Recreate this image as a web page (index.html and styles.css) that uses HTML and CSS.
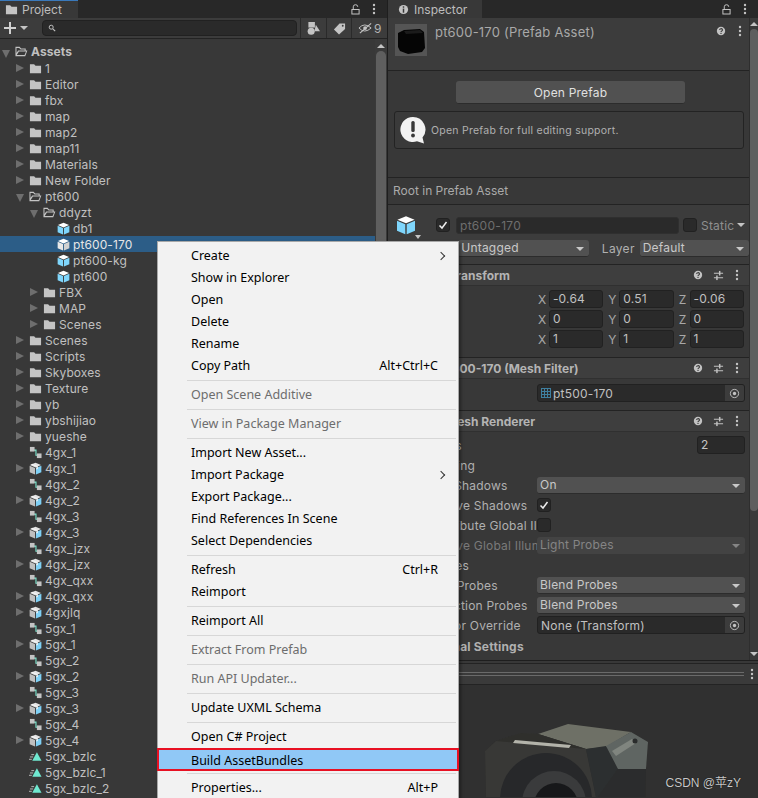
FILE: index.html
```html
<!DOCTYPE html>
<html lang="en">
<head>
    <meta charset="UTF-8">
    <title>Unity Project and Inspector</title>
    <link rel="stylesheet" href="styles.css">
</head>
<body>
    <svg class="defs" width="0" height="0">
        <symbol id="folder" viewBox="0 0 14 14"><path d="M1 2.5h4.5L7 4h6v8H1z" fill="#c4c4c4"/></symbol>
        <symbol id="folder-open" viewBox="0 0 14 14"><path d="M.5 2h4.5l1.5 1.7h5v2.2h1.8L11 12H.5zM1.6 3.2v5.4L3.4 5.900h7V4.900H6L4.500 3.200zM1.900 10.900h8.400l1.600-3.900H4.200z" fill="#c4c4c4" fill-rule="evenodd"/></symbol>
        <symbol id="cube" viewBox="0 0 14 14"><path d="M7 .8l6 2.500L7 5.800 1 3.300z" fill="#fff"/><path d="M.7 4l5.800 2.400v7L.7 11z" fill="#7fd6fc"/><path d="M13.300 4L7.500 6.400v7l5.800-2.400z" fill="#7fd6fc"/></symbol>
        <symbol id="cube-sel" viewBox="0 0 14 14"><path d="M7 .8l6 2.500L7 5.800 1 3.300z" fill="#fff"/><path d="M.7 4l5.800 2.400v7L.7 11z" fill="#e8e8e8"/><path d="M13.300 4L7.500 6.400v7l5.800-2.400z" fill="#d2d2d2"/></symbol>
        <symbol id="model" viewBox="0 0 14 14"><path d="M7 .8l6 2.500L7 5.800 1 3.300z" fill="#e4e4e4"/><path d="M.7 4l5.800 2.400v7L.7 11z" fill="#c0c0c0"/><path d="M13.300 4L7.500 6.400v7l5.800-2.400z" fill="#7fd0f5"/><path d="M3.500 2l6 2.500v3l-1.500.6V5.200L2 2.700z" fill="#f4f4f4"/></symbol>
        <symbol id="ctrl" viewBox="0 0 14 14"><path d="M4 4.500h3.500v5.500H10" fill="none" stroke="#7de8d0" stroke-width="1.200"/><rect x="1" y="1" width="5" height="5" fill="#c4c4c4"/><rect x="8.500" y="8" width="5" height="5" fill="#c4c4c4"/></symbol>
        <symbol id="clip" viewBox="0 0 14 14"><path d="M8.500 2.500l5 9h-10z" fill="#70e8d0"/><path d="M2.500 5h3M1 7.500h3.500M0 10h3" stroke="#c4c4c4" stroke-width="1"/></symbol>
        <symbol id="help" viewBox="0 0 12 12"><circle cx="6" cy="6" r="5" fill="#c2c2c2"/><path d="M4.400 4.700a1.700 1.500 0 1 1 2.500 1.300c-.6.400-.9.600-.9 1.300" fill="none" stroke="#3c3c3c" stroke-width="1.300"/><rect x="5.300" y="8.200" width="1.400" height="1.400" fill="#3c3c3c"/></symbol>
        <symbol id="sliders" viewBox="0 0 12 12"><path d="M1 3.500h10M1 8.500h10" stroke="#c2c2c2" stroke-width="1.200"/><rect x="6.500" y="1" width="1.600" height="5" fill="#c2c2c2"/><rect x="3.500" y="6" width="1.600" height="5" fill="#c2c2c2"/></symbol>
        <symbol id="dots" viewBox="0 0 4 12"><circle cx="2" cy="2" r="1.200" fill="#c4c4c4"/><circle cx="2" cy="6" r="1.200" fill="#c4c4c4"/><circle cx="2" cy="10" r="1.200" fill="#c4c4c4"/></symbol>
        <symbol id="lock" viewBox="0 0 10 12"><path d="M2.500 5.500V3a2.500 2.300 0 0 1 5 0" fill="none" stroke="#c4c4c4" stroke-width="1.100"/><rect x="1" y="6" width="8" height="5" fill="none" stroke="#c4c4c4" stroke-width="1.100"/></symbol>
        <symbol id="target" viewBox="0 0 12 12"><circle cx="6" cy="6" r="4.500" fill="none" stroke="#c4c4c4" stroke-width="1"/><circle cx="6" cy="6" r="1.800" fill="#c4c4c4"/></symbol>
    </svg>

    <div class="editor">
        <section class="panel project">
            <div class="tabbar">
                <div class="tab tab-project">
                    <svg class="tab-icon"><use href="#folder"/></svg>
                    <span>Project</span>
                </div>
                <div class="tab-tools">
                    <svg class="lock"><use href="#lock"/></svg>
                    <svg class="dots"><use href="#dots"/></svg>
                </div>
            </div>
            <div class="toolbar">
                <div class="add"><span class="plus"></span><span class="caret"></span></div>
                <div class="search">
                    <svg viewBox="0 0 10 10" class="search-icon"><circle cx="4" cy="4" r="2.500" fill="none" stroke="#c4c4c4" stroke-width="1.200"/><path d="M6 6l3 3" stroke="#c4c4c4" stroke-width="1.400"/></svg>
                </div>
                <div class="tool tool-type">
                    <svg viewBox="0 0 14 14" class="tool-icon"><rect x="1.500" y="0" width="7" height="6" fill="#c4c4c4"/><circle cx="4.500" cy="10" r="3.800" fill="#c4c4c4"/><path d="M9.500 3l4.500 7H8z" fill="#c4c4c4"/></svg>
                </div>
                <div class="tool tool-label">
                    <svg viewBox="0 0 14 14" class="tool-icon"><path d="M7 1.500h6v6L6.500 13.500 1 8z" fill="#c4c4c4"/><circle cx="10.500" cy="4" r="1" fill="#3c3c3c"/></svg>
                </div>
                <div class="tool tool-hidden">
                    <svg viewBox="0 0 16 12" class="eye"><path d="M1 6q6-6.500 13 0q-7 6.500-13 0z" fill="none" stroke="#c4c4c4" stroke-width="1"/><circle cx="7.500" cy="6" r="2" fill="#c4c4c4"/><path d="M2 11.500L14 1" stroke="#c4c4c4" stroke-width="1.200"/></svg>
                    <span>9</span>
                </div>
            </div>
            <div class="browser">
                <div class="tree">
                    <div class="row root d0"><span class="arrow open"></span><svg class="ic"><use href="#folder-open"/></svg><span>Assets</span></div>
                    <div class="row d1"><span class="arrow"></span><svg class="ic"><use href="#folder"/></svg><span>1</span></div>
                    <div class="row d1"><span class="arrow"></span><svg class="ic"><use href="#folder"/></svg><span>Editor</span></div>
                    <div class="row d1"><span class="arrow"></span><svg class="ic"><use href="#folder"/></svg><span>fbx</span></div>
                    <div class="row d1"><span class="arrow"></span><svg class="ic"><use href="#folder"/></svg><span>map</span></div>
                    <div class="row d1"><span class="arrow"></span><svg class="ic"><use href="#folder"/></svg><span>map2</span></div>
                    <div class="row d1"><span class="arrow"></span><svg class="ic"><use href="#folder"/></svg><span>map11</span></div>
                    <div class="row d1"><span class="arrow"></span><svg class="ic"><use href="#folder"/></svg><span>Materials</span></div>
                    <div class="row d1"><span class="arrow"></span><svg class="ic"><use href="#folder"/></svg><span>New Folder</span></div>
                    <div class="row d1"><span class="arrow open"></span><svg class="ic"><use href="#folder-open"/></svg><span>pt600</span></div>
                    <div class="row d2"><span class="arrow open"></span><svg class="ic"><use href="#folder-open"/></svg><span>ddyzt</span></div>
                    <div class="row d3"><span class="arrow none"></span><svg class="ic"><use href="#cube"/></svg><span>db1</span></div>
                    <div class="row d3 selected"><span class="arrow none"></span><svg class="ic"><use href="#cube-sel"/></svg><span>pt600-170</span></div>
                    <div class="row d3"><span class="arrow none"></span><svg class="ic"><use href="#cube"/></svg><span>pt600-kg</span></div>
                    <div class="row d3"><span class="arrow none"></span><svg class="ic"><use href="#cube"/></svg><span>pt600</span></div>
                    <div class="row d2"><span class="arrow"></span><svg class="ic"><use href="#folder"/></svg><span>FBX</span></div>
                    <div class="row d2"><span class="arrow"></span><svg class="ic"><use href="#folder"/></svg><span>MAP</span></div>
                    <div class="row d2"><span class="arrow"></span><svg class="ic"><use href="#folder"/></svg><span>Scenes</span></div>
                    <div class="row d1"><span class="arrow"></span><svg class="ic"><use href="#folder"/></svg><span>Scenes</span></div>
                    <div class="row d1"><span class="arrow"></span><svg class="ic"><use href="#folder"/></svg><span>Scripts</span></div>
                    <div class="row d1"><span class="arrow"></span><svg class="ic"><use href="#folder"/></svg><span>Skyboxes</span></div>
                    <div class="row d1"><span class="arrow"></span><svg class="ic"><use href="#folder"/></svg><span>Texture</span></div>
                    <div class="row d1"><span class="arrow"></span><svg class="ic"><use href="#folder"/></svg><span>yb</span></div>
                    <div class="row d1"><span class="arrow"></span><svg class="ic"><use href="#folder"/></svg><span>ybshijiao</span></div>
                    <div class="row d1"><span class="arrow"></span><svg class="ic"><use href="#folder"/></svg><span>yueshe</span></div>
                    <div class="row d1"><span class="arrow none"></span><svg class="ic"><use href="#ctrl"/></svg><span>4gx_1</span></div>
                    <div class="row d1"><span class="arrow"></span><svg class="ic"><use href="#model"/></svg><span>4gx_1</span></div>
                    <div class="row d1"><span class="arrow none"></span><svg class="ic"><use href="#ctrl"/></svg><span>4gx_2</span></div>
                    <div class="row d1"><span class="arrow"></span><svg class="ic"><use href="#model"/></svg><span>4gx_2</span></div>
                    <div class="row d1"><span class="arrow none"></span><svg class="ic"><use href="#ctrl"/></svg><span>4gx_3</span></div>
                    <div class="row d1"><span class="arrow"></span><svg class="ic"><use href="#model"/></svg><span>4gx_3</span></div>
                    <div class="row d1"><span class="arrow none"></span><svg class="ic"><use href="#ctrl"/></svg><span>4gx_jzx</span></div>
                    <div class="row d1"><span class="arrow"></span><svg class="ic"><use href="#model"/></svg><span>4gx_jzx</span></div>
                    <div class="row d1"><span class="arrow none"></span><svg class="ic"><use href="#ctrl"/></svg><span>4gx_qxx</span></div>
                    <div class="row d1"><span class="arrow"></span><svg class="ic"><use href="#model"/></svg><span>4gx_qxx</span></div>
                    <div class="row d1"><span class="arrow"></span><svg class="ic"><use href="#model"/></svg><span>4gxjlq</span></div>
                    <div class="row d1"><span class="arrow none"></span><svg class="ic"><use href="#ctrl"/></svg><span>5gx_1</span></div>
                    <div class="row d1"><span class="arrow"></span><svg class="ic"><use href="#model"/></svg><span>5gx_1</span></div>
                    <div class="row d1"><span class="arrow none"></span><svg class="ic"><use href="#ctrl"/></svg><span>5gx_2</span></div>
                    <div class="row d1"><span class="arrow"></span><svg class="ic"><use href="#model"/></svg><span>5gx_2</span></div>
                    <div class="row d1"><span class="arrow none"></span><svg class="ic"><use href="#ctrl"/></svg><span>5gx_3</span></div>
                    <div class="row d1"><span class="arrow"></span><svg class="ic"><use href="#model"/></svg><span>5gx_3</span></div>
                    <div class="row d1"><span class="arrow none"></span><svg class="ic"><use href="#ctrl"/></svg><span>5gx_4</span></div>
                    <div class="row d1"><span class="arrow"></span><svg class="ic"><use href="#model"/></svg><span>5gx_4</span></div>
                    <div class="row d1"><span class="arrow none"></span><svg class="ic"><use href="#clip"/></svg><span>5gx_bzlc</span></div>
                    <div class="row d1"><span class="arrow none"></span><svg class="ic"><use href="#clip"/></svg><span>5gx_bzlc_1</span></div>
                    <div class="row d1"><span class="arrow none"></span><svg class="ic"><use href="#clip"/></svg><span>5gx_bzlc_2</span></div>
                </div>
                <div class="scrollbar">
                    <span class="sb-up"></span>
                    <span class="sb-thumb"></span>
                </div>
            </div>
        </section>

        <section class="panel inspector">
            <div class="tabbar">
                <div class="tab tab-inspector">
                    <svg viewBox="0 0 12 12" class="tab-icon info"><circle cx="6" cy="6" r="5" fill="#c4c4c4"/><rect x="5.200" y="5" width="1.600" height="4.500" fill="#383838"/><rect x="5.200" y="2.500" width="1.600" height="1.600" fill="#383838"/></svg>
                    <span>Inspector</span>
                </div>
                <div class="tab-tools">
                    <svg class="lock"><use href="#lock"/></svg>
                    <svg class="dots"><use href="#dots"/></svg>
                </div>
            </div>
            <div class="insp-body">
                <div class="insp-main">
                    <div class="asset-head">
                        <div class="thumb">
                            <svg viewBox="0 0 32 32"><path d="M3 9l6-3 16-1 4 3 1 16-3 4-14 2-8-3-2-4z" fill="#050505"/><path d="M9 7l16-1 3 3-17 1z" fill="#1b1b1b"/></svg>
                        </div>
                        <div class="asset-title">pt600-170 (Prefab Asset)</div>
                        <svg class="head-help"><use href="#help"/></svg>
                        <svg class="dots"><use href="#dots"/></svg>
                    </div>
                    <div class="prefab-box">
                        <button class="open-btn">Open Prefab</button>
                        <div class="helpbox">
                            <svg viewBox="0 0 26 28" class="help-bubble"><path d="M13 1a12.500 12.500 0 1 0 4 24.300L24 27.500l-1.500-6A12.500 12.500 0 0 0 13 1z" fill="#f2f2f2"/><rect x="11.300" y="5" width="3.400" height="11" rx="1.500" fill="#383838"/><circle cx="13" cy="19.500" r="1.900" fill="#383838"/></svg>
                            <span>Open Prefab for full editing support.</span>
                        </div>
                    </div>
                    <div class="root-label">Root in Prefab Asset</div>
                    <div class="go-head">
                        <div class="go-row1">
                            <span class="go-icon"><svg viewBox="0 0 14 14"><use href="#cube"/></svg><span class="go-caret"></span></span>
                            <span class="check on"><svg viewBox="0 0 12 12"><path d="M2.500 6.500l2.500 2.500 4.500-6" fill="none" stroke="#eee" stroke-width="1.500"/></svg></span>
                            <span class="name-field">pt600-170</span>
                            <span class="check"></span>
                            <span class="static-label">Static</span><span class="caret"></span>
                        </div>
                        <div class="go-row2">
                            <span class="tag-label">Tag</span>
                            <span class="dropdown tag-drop">Untagged</span>
                            <span class="layer-label">Layer</span>
                            <span class="dropdown layer-drop">Default</span>
                        </div>
                    </div>

                    <div class="comp-head">
                        <span class="comp-title t-transform">Transform</span>
                        <svg class="ch-help"><use href="#help"/></svg><svg class="ch-sliders"><use href="#sliders"/></svg><svg class="dots"><use href="#dots"/></svg>
                    </div>
                    <div class="comp-body transform-body">
                        <div class="vec"><span class="axis">X</span><span class="field">-0.64</span><span class="axis">Y</span><span class="field">0.51</span><span class="axis">Z</span><span class="field">-0.06</span></div>
                        <div class="vec"><span class="axis">X</span><span class="field">0</span><span class="axis">Y</span><span class="field">0</span><span class="axis">Z</span><span class="field">0</span></div>
                        <div class="vec"><span class="axis">X</span><span class="field">1</span><span class="axis">Y</span><span class="field">1</span><span class="axis">Z</span><span class="field">1</span></div>
                    </div>

                    <div class="comp-head">
                        <span class="comp-title t-filter">pt 500-170 (Mesh Filter)</span>
                        <svg class="ch-help"><use href="#help"/></svg><svg class="ch-sliders"><use href="#sliders"/></svg><svg class="dots"><use href="#dots"/></svg>
                    </div>
                    <div class="comp-body filter-body">
                        <div class="obj-field mesh-field">
                            <svg viewBox="0 0 10 10" class="mesh-icon"><path d="M0 .5h10M0 3.500h10M0 6.500h10M0 9.500h10M.5 0v10M3.500 0v10M6.500 0v10M9.500 0v10" stroke="#3f7f9f" stroke-width="1"/></svg>
                            <span>pt500-170</span>
                            <span class="picker"><svg><use href="#target"/></svg></span>
                        </div>
                    </div>

                    <div class="comp-head">
                        <span class="comp-title t-renderer">Mesh Renderer</span>
                        <svg class="ch-help"><use href="#help"/></svg><svg class="ch-sliders"><use href="#sliders"/></svg><svg class="dots"><use href="#dots"/></svg>
                    </div>
                    <div class="comp-body renderer-body">
                        <div class="prop"><span class="lab lab-mat">Materials</span><span class="size-field">2</span></div>
                        <div class="prop"><span class="lab">Lighting</span></div>
                        <div class="prop"><span class="lab lab-cast">Cast Shadows</span><span class="dropdown">On</span></div>
                        <div class="prop"><span class="lab lab-cast">Receive Shadows</span><span class="check on"><svg viewBox="0 0 12 12"><path d="M2.500 6.500l2.500 2.500 4.500-6" fill="none" stroke="#eee" stroke-width="1.500"/></svg></span></div>
                        <div class="prop"><span class="lab lab-cast">Contribute Global Illumination</span><span class="check"></span></div>
                        <div class="prop off"><span class="lab lab-cast">Receive Global Illumination</span><span class="dropdown">Light Probes</span></div>
                        <div class="prop"><span class="lab">Probes</span></div>
                        <div class="prop"><span class="lab lab-cast">Light Probes</span><span class="dropdown">Blend Probes</span></div>
                        <div class="prop"><span class="lab lab-cast">Reflection Probes</span><span class="dropdown">Blend Probes</span></div>
                        <div class="prop"><span class="lab lab-cast">Anchor Override</span><span class="obj-field"><span>None (Transform)</span><span class="picker"><svg><use href="#target"/></svg></span></span></div>
                        <div class="prop addl"><span class="lab lab-add">Additional Settings</span></div>
                    </div>
                </div>
                <div class="scrollbar insp-scroll">
                    <span class="sb-up"></span>
                    <span class="sb-thumb"></span>
                    <span class="sb-down"></span>
                </div>
            </div>
            <div class="preview-bar">
                <span class="grip"></span>
                <svg class="dots"><use href="#dots"/></svg>
            </div>
            <div class="preview">
                <svg viewBox="388 686 370 112" class="model">
                    <path d="M485 752l11-10 25-8 17 1 30-10 63 8 17 10-2 27v28H486z" fill="#2e2e2c"/>
                    <path d="M538 735l30-10 63 8-25 15-20 2z" fill="#6e7066"/>
                    <path d="M485 752l11-10 25-8 17 1 48 15 10 48H486z" fill="#383836"/>
                    <path d="M496 742l25-8 17 1 48 15-90-8z" fill="#2f2f2c"/>
                    <path d="M586 750l20-3 12 23-20 28h-2z" fill="#2c2f30"/>
                    <path d="M606 747l25-14 17 10-2 27h-28z" fill="#5f6562"/>
                    <path d="M612 752l20-12 4 4-20 13z" fill="#80857f"/>
                    <path d="M618 770h28l-1 28h-47z" fill="#2b2c2d"/>
                    <circle cx="635" cy="742" r="2.500" fill="#2a2c2c"/>
                    <path d="M515 741l56 5-2 3-56-5z" fill="#b3b3aa"/>
                    <circle cx="546" cy="800" r="46" fill="#27282a"/>
                    <circle cx="554" cy="804" r="32" fill="#3a3b3c"/>
                    <circle cx="556" cy="806" r="22" fill="#17181a"/>
                </svg>
                <span class="watermark">CSDN @苹zY</span>
            </div>
        </section>
    </div>

    <div class="menu">
        <div class="mi">Create<span class="chev"></span></div>
        <div class="mi">Show in Explorer</div>
        <div class="mi">Open</div>
        <div class="mi">Delete</div>
        <div class="mi">Rename</div>
        <div class="mi">Copy Path<span class="key">Alt+Ctrl+C</span></div>
        <div class="sep"></div>
        <div class="mi dis">Open Scene Additive</div>
        <div class="sep"></div>
        <div class="mi dis">View in Package Manager</div>
        <div class="sep"></div>
        <div class="mi">Import New Asset...</div>
        <div class="mi">Import Package<span class="chev"></span></div>
        <div class="mi">Export Package...</div>
        <div class="mi">Find References In Scene</div>
        <div class="mi">Select Dependencies</div>
        <div class="sep"></div>
        <div class="mi">Refresh<span class="key">Ctrl+R</span></div>
        <div class="mi">Reimport</div>
        <div class="sep"></div>
        <div class="mi">Reimport All</div>
        <div class="sep"></div>
        <div class="mi dis">Extract From Prefab</div>
        <div class="sep"></div>
        <div class="mi dis">Run API Updater...</div>
        <div class="sep"></div>
        <div class="mi">Update UXML Schema</div>
        <div class="sep"></div>
        <div class="mi">Open C# Project</div>
        <div class="mi hot">Build AssetBundles</div>
        <div class="sep"></div>
        <div class="mi">Properties...<span class="key">Alt+P</span></div>
    </div>
</body>
</html>
```

FILE: styles.css
```css
* {
    box-sizing: border-box;
    margin: 0;
    padding: 0;
}

body {
    width: 758px;
    height: 798px;
    overflow: hidden;
    position: relative;
    background: #282828;
    color: #c4c4c4;
    font-family: Inter, "Liberation Sans", sans-serif;
    font-size: 12px;
}

.defs {
    position: absolute;
}

.editor {
    display: grid;
    grid-template-columns: 388px 370px;
    height: 798px;
}

.panel {
    display: flex;
    flex-direction: column;
    height: 798px;
    overflow: hidden;
    background: #383838;
}

.project {
    border-right: 1px solid #1e1e1e;
}

/* tabs */
.tabbar {
    display: flex;
    justify-content: space-between;
    align-items: center;
    height: 18px;
    flex: none;
    background: #282828;
}

.tab {
    display: flex;
    align-items: center;
    height: 18px;
    background: #383838;
    color: #bdbdbd;
    font-size: 12px;
}

.tab-project {
    width: 78px;
    padding-left: 5px;
    border-top: 1px solid #3a79bb;
}

.tab-inspector {
    width: 94px;
    padding-left: 6px;
}

.tab-icon {
    width: 13px;
    height: 13px;
    margin-right: 4px;
}

.tab-icon.info {
    width: 11px;
    height: 11px;
    margin: 0 5px 0 4px;
}

.tab-tools {
    display: flex;
    align-items: center;
    gap: 12px;
    padding-right: 11px;
}

.lock {
    width: 9px;
    height: 11px;
}

.dots {
    width: 4px;
    height: 12px;
    flex: none;
}

/* project toolbar */
.toolbar {
    display: flex;
    align-items: center;
    height: 21px;
    flex: none;
    background: #3c3c3c;
    border-bottom: 1px solid #232323;
}

.add {
    display: flex;
    align-items: center;
    width: 42px;
    padding-left: 4px;
    gap: 4px;
}

.plus {
    width: 12px;
    height: 12px;
    background: linear-gradient(#d0d0d0, #d0d0d0) center / 12px 2px no-repeat,
                linear-gradient(#d0d0d0, #d0d0d0) center / 2px 12px no-repeat;
}

.caret {
    width: 0;
    height: 0;
    border-left: 4px solid transparent;
    border-right: 4px solid transparent;
    border-top: 4px solid #c4c4c4;
}

.search {
    display: flex;
    align-items: center;
    width: 257px;
    height: 16px;
    padding-left: 5px;
    background: #2a2a2a;
    border: 1px solid #212121;
    border-radius: 4px;
}

.search-icon {
    width: 8px;
    height: 8px;
}

.tool {
    display: flex;
    align-items: center;
    justify-content: center;
    height: 20px;
    border-left: 1px solid #2a2a2a;
}

.tool-type {
    width: 27px;
    margin-left: 3px;
}

.tool-label {
    width: 25px;
}

.tool-hidden {
    width: 36px;
    gap: 1px;
    font-size: 12px;
    color: #b4b4b4;
}

.tool-icon {
    width: 13px;
    height: 13px;
}

.eye {
    width: 15px;
    height: 12px;
}

/* project tree */
.browser {
    display: flex;
    flex: 1;
    min-height: 0;
}

.tree {
    flex: 1;
    padding-top: 4px;
    min-width: 0;
}

.row {
    display: flex;
    align-items: center;
    height: 16px;
    white-space: nowrap;
    color: #c0c0c0;
    letter-spacing: 0.1px;
}

.d0 { padding-left: 2px; }
.d1 { padding-left: 16px; }
.d2 { padding-left: 30px; }
.d3 { padding-left: 44px; }

.root {
    height: 17px;
    font-weight: 700;
}

.selected {
    background: #2c5d87;
    color: #e6e6e6;
}

.arrow {
    flex: none;
    width: 13px;
    height: 8px;
    position: relative;
}

.arrow::before {
    content: "";
    position: absolute;
    left: 0;
    top: 0;
    border-top: 4px solid transparent;
    border-bottom: 4px solid transparent;
    border-left: 8px solid #6e6e6e;
}

.arrow.open::before {
    top: 2px;
    border-left: 4px solid transparent;
    border-right: 4px solid transparent;
    border-top: 8px solid #6e6e6e;
    border-bottom: 0;
}

.arrow.none::before {
    display: none;
}

.ic {
    flex: none;
    width: 13px;
    height: 13px;
    margin-right: 3px;
}

.scrollbar {
    flex: none;
    display: flex;
    flex-direction: column;
    align-items: center;
    width: 12px;
    padding-top: 5px;
    background: #3a3a3a;
}

.sb-up {
    width: 0;
    height: 0;
    border-left: 4px solid transparent;
    border-right: 4px solid transparent;
    border-bottom: 4px solid #c4c4c4;
    flex: none;
}

.sb-down {
    width: 0;
    height: 0;
    margin-top: auto;
    margin-bottom: 4px;
    border-left: 4px solid transparent;
    border-right: 4px solid transparent;
    border-top: 4px solid #c4c4c4;
    flex: none;
}

.sb-thumb {
    width: 10px;
    height: 500px;
    margin-top: 3px;
    background: #5f5f5f;
    border-radius: 5px;
    flex: none;
}

/* inspector */
.insp-body {
    display: flex;
    height: 643px;
    flex: none;
    border-bottom: 1px solid #1e1e1e;
}

.insp-main {
    flex: 1;
    min-width: 0;
    overflow: hidden;
}

.insp-scroll {
    width: 9px;
    padding-top: 4px;
    border-left: 1px solid #2e2e2e;
}

.insp-scroll .sb-thumb {
    width: 8px;
    height: 482px;
    margin-top: 3px;
}

.asset-head {
    display: flex;
    align-items: flex-start;
    height: 53px;
    padding: 6px 0 0 7px;
    background: #3c3c3c;
    border-bottom: 1px solid #232323;
}

.thumb {
    width: 32px;
    height: 32px;
    background: #555;
    flex: none;
}

.thumb svg {
    display: block;
}

.asset-title {
    flex: 1;
    margin: 1px 0 0 8px;
    font-size: 13px;
    line-height: 14px;
    letter-spacing: 0.2px;
    color: #a9a9a9;
}

.head-help {
    width: 10px;
    height: 10px;
    margin: 2px 12px 0 0;
}

.asset-head .dots {
    margin: 1px 7px 0 0;
}

.prefab-box {
    height: 107px;
    padding-top: 10px;
    border-bottom: 1px solid #232323;
}

.open-btn {
    display: block;
    width: 229px;
    height: 23px;
    margin-left: 68px;
    background: #515151;
    color: #e0e0e0;
    border: 0;
    border-bottom: 1px solid #2c2c2c;
    border-radius: 3px;
    font: 12px Inter, "Liberation Sans", sans-serif;
    letter-spacing: 0.2px;
}

.helpbox {
    display: flex;
    align-items: center;
    gap: 5px;
    height: 38px;
    margin: 7px 5px 0 6px;
    padding-left: 5px;
    background: #3a3a3a;
    border: 1px solid #232323;
    border-radius: 3px;
    font-size: 10.5px;
    letter-spacing: 0.25px;
    color: #b0b0b0;
}

.help-bubble {
    width: 26px;
    height: 28px;
    flex: none;
}

.root-label {
    height: 27px;
    padding-left: 5px;
    line-height: 26px;
    color: #aaa;
    border-bottom: 1px solid #232323;
}

.go-head {
    height: 60px;
    background: #3c3c3c;
    border-bottom: 1px solid #232323;
}

.go-row1 {
    display: flex;
    align-items: center;
    height: 20px;
    margin-top: 0;
    padding: 10px 0 0 8px;
    box-sizing: content-box;
}

.go-icon {
    position: relative;
    width: 20px;
    height: 20px;
    margin-right: 20px;
    flex: none;
}

.go-icon svg {
    width: 20px;
    height: 20px;
    display: block;
}

.go-caret {
    position: absolute;
    left: 19px;
    top: 20px;
    border-left: 3px solid transparent;
    border-right: 3px solid transparent;
    border-top: 4px solid #c4c4c4;
}

.check {
    display: block;
    flex: none;
    width: 14px;
    height: 14px;
    background: #2a2a2a;
    border: 1px solid #212121;
    border-radius: 3px;
}

.check svg {
    display: block;
    width: 12px;
    height: 12px;
}

.name-field {
    width: 223px;
    height: 17px;
    margin: 0 4px 0 6px;
    padding-left: 3px;
    line-height: 15px;
    background: #2a2a2a;
    border: 1px solid #2f2f2f;
    border-radius: 3px;
    color: #6e6e6e;
    letter-spacing: 0.3px;
}

.static-label {
    margin: 0 3px 0 4px;
    color: #8f8f8f;
    letter-spacing: 0.2px;
}

.go-row2 {
    display: flex;
    align-items: center;
    height: 18px;
    margin-top: 4px;
    padding-left: 8px;
}

.tag-label {
    width: 50px;
}

.dropdown {
    position: relative;
    display: block;
    height: 17px;
    padding-left: 3px;
    line-height: 15px;
    background: #515151;
    border-bottom: 1px solid #2c2c2c;
    border-radius: 3px;
    color: #c8c8c8;
    letter-spacing: 0.2px;
}

.dropdown::after {
    content: "";
    position: absolute;
    right: 5px;
    top: 7px;
    border-left: 4px solid transparent;
    border-right: 4px solid transparent;
    border-top: 4px solid #c8c8c8;
}

.tag-drop {
    width: 135px;
    margin-left: 14px;
}

.layer-label {
    margin: 0 5px 0 13px;
    color: #b0b0b0;
    letter-spacing: 0.3px;
}

.layer-drop {
    width: 113px;
}

.comp-head {
    display: flex;
    align-items: center;
    height: 21px;
    padding-right: 10px;
    background: #3e3e3e;
    border-bottom: 1px solid #303030;
}

.comp-title {
    flex: 1;
    font-weight: 700;
    color: #b4b4b4;
    white-space: nowrap;
}

.t-transform { padding-left: 61px; }
.t-filter { padding-left: 49px; }
.t-renderer { padding-left: 58px; }

.ch-help {
    width: 10px;
    height: 10px;
    margin-right: 10px;
}

.ch-sliders {
    width: 11px;
    height: 11px;
    margin-right: 11px;
}

.comp-body {
    border-bottom: 1px solid #232323;
}

.transform-body {
    height: 72px;
    padding-top: 4px;
}

.vec {
    display: flex;
    align-items: center;
    height: 18px;
    margin-bottom: 2px;
    padding-left: 150px;
}

.axis {
    width: 11px;
    margin-right: 0;
    color: #a8a8a8;
}

.field {
    width: 55px;
    height: 18px;
    margin-right: 5px;
    padding-left: 3px;
    line-height: 16px;
    background: #2a2a2a;
    border: 1px solid #212121;
    border-radius: 3px;
    color: #c0c0c0;
    letter-spacing: 0.2px;
}

.filter-body {
    height: 32px;
    padding: 5px 0 0 149px;
}

.obj-field {
    display: flex;
    align-items: center;
    width: 208px;
    height: 18px;
    padding-left: 3px;
    background: #2a2a2a;
    border: 1px solid #212121;
    border-radius: 3px;
    color: #c0c0c0;
    letter-spacing: 0.2px;
    overflow: hidden;
}

.obj-field > span:first-child {
    flex: 1;
}

.mesh-icon {
    width: 10px;
    height: 10px;
    margin-right: 2px;
    flex: none;
}

.mesh-field > span:nth-child(2) {
    flex: 1;
}

.picker {
    display: flex;
    align-items: center;
    justify-content: center;
    width: 19px;
    height: 18px;
    flex: none;
    background: #3c3c3c;
}

.picker svg {
    width: 11px;
    height: 11px;
}

.renderer-body {
    height: 229px;
    padding-top: 3px;
    border-bottom: 1px solid #1e1e1e;
}

.prop {
    display: grid;
    grid-template-columns: 149px 208px;
    align-items: center;
    height: 20px;
}

.lab {
    display: block;
    padding-left: 40px;
    overflow: hidden;
    white-space: nowrap;
    color: #b0b0b0;
    letter-spacing: 0.2px;
}

.lab-mat { padding-left: 20px; }
.lab-cast { padding-left: 36px; }

.lab-add {
    font-weight: 700;
    padding-left: 21px;
    overflow: visible;
}

.off .lab { color: #7a7a7a; }

.off .dropdown {
    background: #434343;
    color: #858585;
    border-bottom: 0;
}

.off .dropdown::after {
    border-top-color: #858585;
}

.addl {
    margin-top: 1px;
}

.size-field {
    justify-self: end;
    width: 48px;
    height: 18px;
    padding-left: 3px;
    line-height: 16px;
    background: #2a2a2a;
    border: 1px solid #212121;
    border-radius: 3px;
}

.preview-bar {
    display: flex;
    align-items: center;
    height: 22px;
    margin-top: 2px;
    flex: none;
    padding: 0 2px 0 5px;
    background: #3a3a3a;
    border-top: 1px solid #232323;
    border-bottom: 1px solid #232323;
}

.grip {
    flex: 1;
    height: 4px;
    margin-left: 60px;
    border-top: 1px solid #6a6a6a;
    border-bottom: 1px solid #6a6a6a;
}

.preview-bar .dots {
    margin: 0 2px 0 6px;
}

.preview {
    position: relative;
    flex: 1;
    background: #303030;
}

.model {
    display: block;
    width: 370px;
    height: 112px;
}

.watermark {
    position: absolute;
    right: 17px;
    bottom: 8px;
    font-family: "Liberation Sans", "Noto Sans CJK SC", sans-serif;
    font-size: 12px;
    color: #c8c8c8;
    text-shadow: 0 0 1px #000;
}

/* context menu */
.menu {
    position: absolute;
    left: 157px;
    top: 241px;
    width: 302px;
    height: 560px;
    padding-top: 3px;
    background: #f2f2f2;
    border: 1px solid #a8a8a8;
    box-shadow: 2px 2px 3px rgba(0, 0, 0, 0.35);
    font-family: "Noto Sans", "Open Sans", sans-serif;
    font-size: 12.5px;
    color: #000;
}

.mi {
    position: relative;
    height: 22px;
    padding-left: 33px;
    line-height: 22px;
    white-space: nowrap;
}

.dis {
    color: #6d6d6d;
}

.key {
    position: absolute;
    right: 20px;
    top: 0;
}

.chev {
    position: absolute;
    right: 14px;
    top: 8px;
    width: 6px;
    height: 6px;
    border-top: 1px solid #333;
    border-right: 1px solid #333;
    transform: rotate(45deg);
}

.sep {
    height: 7px;
    margin: 0 2px 0 29px;
    padding-top: 3px;
    background: linear-gradient(#d7d7d7, #d7d7d7) 0 3px / 100% 1px no-repeat;
}

.hot {
    margin: 0;
    height: 23px;
    padding-left: 32px;
    line-height: 21px;
    background: #90c8f6;
    border: 2px solid #e81123;
    margin-bottom: -1px;
    margin-left: -1px;
    margin-right: -1px;
}
```
